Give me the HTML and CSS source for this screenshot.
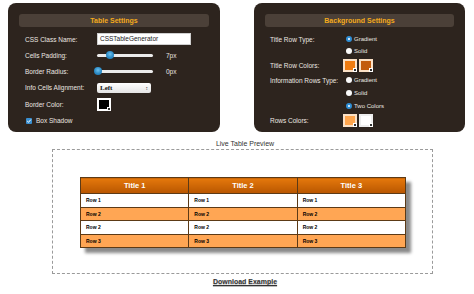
FILE: index.html
```html
<!DOCTYPE html>
<html>
<head>
<meta charset="utf-8">
<link rel="stylesheet" href="styles.css">
</head>
<body>
<div class="page">
  <div class="panels">
    <section class="panel panel-left">
      <h2 class="panel-title">Table Settings</h2>
      <div class="rows rows-left">
        <div class="row h16"><span class="label">CSS Class Name:</span><span class="text-input">CSSTableGenerator</span></div>
        <div class="row h16"><span class="label">Cells Padding:</span><span class="slider"><span class="track"></span><span class="thumb" style="left:9px"></span></span><span class="val">7px</span></div>
        <div class="row h16"><span class="label">Border Radius:</span><span class="slider"><span class="track"></span><span class="thumb" style="left:-3px"></span></span><span class="val">0px</span></div>
        <div class="row h17"><span class="label">Info Cells Alignment:</span><span class="select"><span class="select-text">Left</span><span class="arrows">&#x2195;</span></span></div>
        <div class="row h16"><span class="label">Border Color:</span><span class="swatch sw-black"><span class="corner"></span></span></div>
        <div class="row h17 check-row"><span class="checkbox"><svg viewBox="0 0 6 6" width="6" height="6"><path d="M1.2 3 L2.5 4.3 L4.8 1.6" fill="none" stroke="#fff" stroke-width="1"/></svg></span><span class="label">Box Shadow</span></div>
      </div>
    </section>
    <section class="panel panel-right">
      <h2 class="panel-title">Background Settings</h2>
      <div class="rows rows-right">
        <div class="row h12"><span class="label rlabel">Title Row Type:</span><span class="radio on"></span><span class="opt">Gradient</span></div>
        <div class="row h12"><span class="label rlabel"></span><span class="radio"></span><span class="opt">Solid</span></div>
        <div class="row h16"><span class="label rlabel">Title Row Colors:</span><span class="swatch sw-orange"><span class="corner"></span></span><span class="swatch sw-dark"><span class="corner"></span></span></div>
        <div class="row h14"><span class="label rlabel">Information Rows Type:</span><span class="radio"></span><span class="opt">Gradient</span></div>
        <div class="row h12"><span class="label rlabel"></span><span class="radio"></span><span class="opt">Solid</span></div>
        <div class="row h14"><span class="label rlabel"></span><span class="radio on"></span><span class="opt">Two Colors</span></div>
        <div class="row h14"><span class="label rlabel">Rows Colors:</span><span class="swatch sw-light"><span class="corner"></span></span><span class="swatch sw-white"><span class="corner"></span></span></div>
      </div>
    </section>
  </div>
  <div class="preview-title">Live Table Preview</div>
  <div class="preview-box">
    <table class="demo">
      <tr class="head"><th>Title 1</th><th>Title 2</th><th>Title 3</th></tr>
      <tr class="odd"><td>Row 1</td><td>Row 1</td><td>Row 1</td></tr>
      <tr class="even"><td>Row 2</td><td>Row 2</td><td>Row 2</td></tr>
      <tr class="odd"><td>Row 2</td><td>Row 2</td><td>Row 2</td></tr>
      <tr class="even"><td>Row 3</td><td>Row 3</td><td>Row 3</td></tr>
    </table>
  </div>
  <div class="download"><a class="download-link">Download Example</a></div>
</div>
</body>
</html>
```
FILE: styles.css
```css
html, body { margin: 0; padding: 0; background: #fff; }
body { width: 474px; height: 294px; overflow: hidden; font-family: "Liberation Sans", Arial, sans-serif; }
.page { width: 474px; }
.panels { display: flex; padding: 3px 0 0 8px; gap: 34px; height: 129px; }
.panel { background: #2d241e; border-radius: 8px; padding: 11px 11px 0 11px; box-sizing: border-box; height: 129px; }
.panel-left { width: 212px; }
.panel-right { width: 211px; }
.panel-title { margin: 0; height: 13px; line-height: 13px; background: #4b4038; border-radius: 3px; color: #f5ab1c; font-size: 7px; font-weight: bold; text-align: center; }
.rows-left { margin-top: 4px; padding-left: 6px; }
.rows-right { margin-top: 6px; padding-left: 5px; }
.row { display: flex; align-items: center; }
.h12 { height: 12px; } .h14 { height: 14px; } .h16 { height: 16px; } .h17 { height: 17px; }
.label { color: #ece6e0; font-size: 6.5px; width: 72px; flex: none; white-space: nowrap; }
.rlabel { width: 73px; }
.text-input { width: 94px; height: 12px; box-sizing: border-box; background: #fff; border: 1px solid #cfcfcf; font-size: 6.5px; line-height: 10px; padding-left: 2px; color: #222; }
.slider { position: relative; width: 56px; height: 8px; display: flex; align-items: center; }
.track { display: block; width: 56px; height: 3px; border-radius: 2px; background: #ececec; }
.thumb { position: absolute; top: 0; width: 8px; height: 8px; border-radius: 50%; background: radial-gradient(circle at 50% 40%, #6cc0ee 0, #2b8bc6 55%, #1b6fa5 100%); }
.val { color: #ece6e0; font-size: 6.5px; margin-left: 13px; }
.select { width: 54px; height: 10px; box-sizing: border-box; background: linear-gradient(#ffffff, #e4e4e4); border-radius: 2px; display: flex; align-items: center; justify-content: space-between; padding: 0 3px; }
.select-text { font-family: "Liberation Serif", serif; font-size: 7px; font-weight: bold; color: #111; }
.arrows { font-size: 5px; color: #333; }
.swatch { position: relative; width: 14px; height: 13px; box-sizing: border-box; border: 2px solid #fff; flex: none; }
.swatch + .swatch { margin-left: 2px; }
.sw-black { background: #000; }
.sw-orange { background: #f07c10; border-color: #fbe1c6; }
.sw-dark { background: #c25c0e; border-color: #fbe1c6; }
.sw-light { background: #ffa64e; border-color: #fbe1c6; }
.sw-white { background: #fff; border-color: #eee; }
.corner { position: absolute; right: -2px; bottom: -2px; width: 4px; height: 4px; background: #fff; }
.corner::after { content: ""; position: absolute; left: 1px; top: 1px; width: 2px; height: 2px; background: #333; }
.check-row { padding-left: 1px; }
.checkbox { width: 6px; height: 6px; background: #3a8fd0; border-radius: 1px; display: flex; margin-right: 4px; flex: none; }
.check-row .label { width: auto; }
.radio { width: 6px; height: 6px; border-radius: 50%; background: #fafafa; margin-left: 3px; margin-right: 2px; box-sizing: border-box; flex: none; }
.radio.on { background: #fff; border: 2px solid #2f8fd6; }
.opt { color: #ece6e0; font-size: 6px; }
.preview-title { text-align: center; font-size: 7px; color: #333; padding-top: 6px; height: 11px; line-height: 11px; margin-left: 16px; }
.preview-box { margin-left: 52px; width: 381px; height: 125px; box-sizing: border-box; border: 1px dashed #9a9a9a; padding-top: 27px; }
.demo { border-collapse: collapse; width: 326px; margin-left: 27px; box-shadow: 5px 5px 3px #8a8a8a; table-layout: fixed; }
.demo th, .demo td { border: 1px solid #5c3a16; padding: 0 0 0 5px; }
.demo th { height: 15px; background: linear-gradient(#e5780c, #b85600); color: #fff; font-size: 7.5px; font-weight: bold; text-align: center; padding: 0; }
.demo td { height: 12.5px; font-size: 5px; font-weight: bold; color: #000; }
.odd td { background: #fff; }
.even td { background: #ffa654; }
.download { text-align: center; margin-left: 16px; line-height: 10px; height: 10px; }
.download-link { font-size: 7px; font-weight: bold; color: #333; text-decoration: underline; text-shadow: 0 1px 1px #bbb; }
```
